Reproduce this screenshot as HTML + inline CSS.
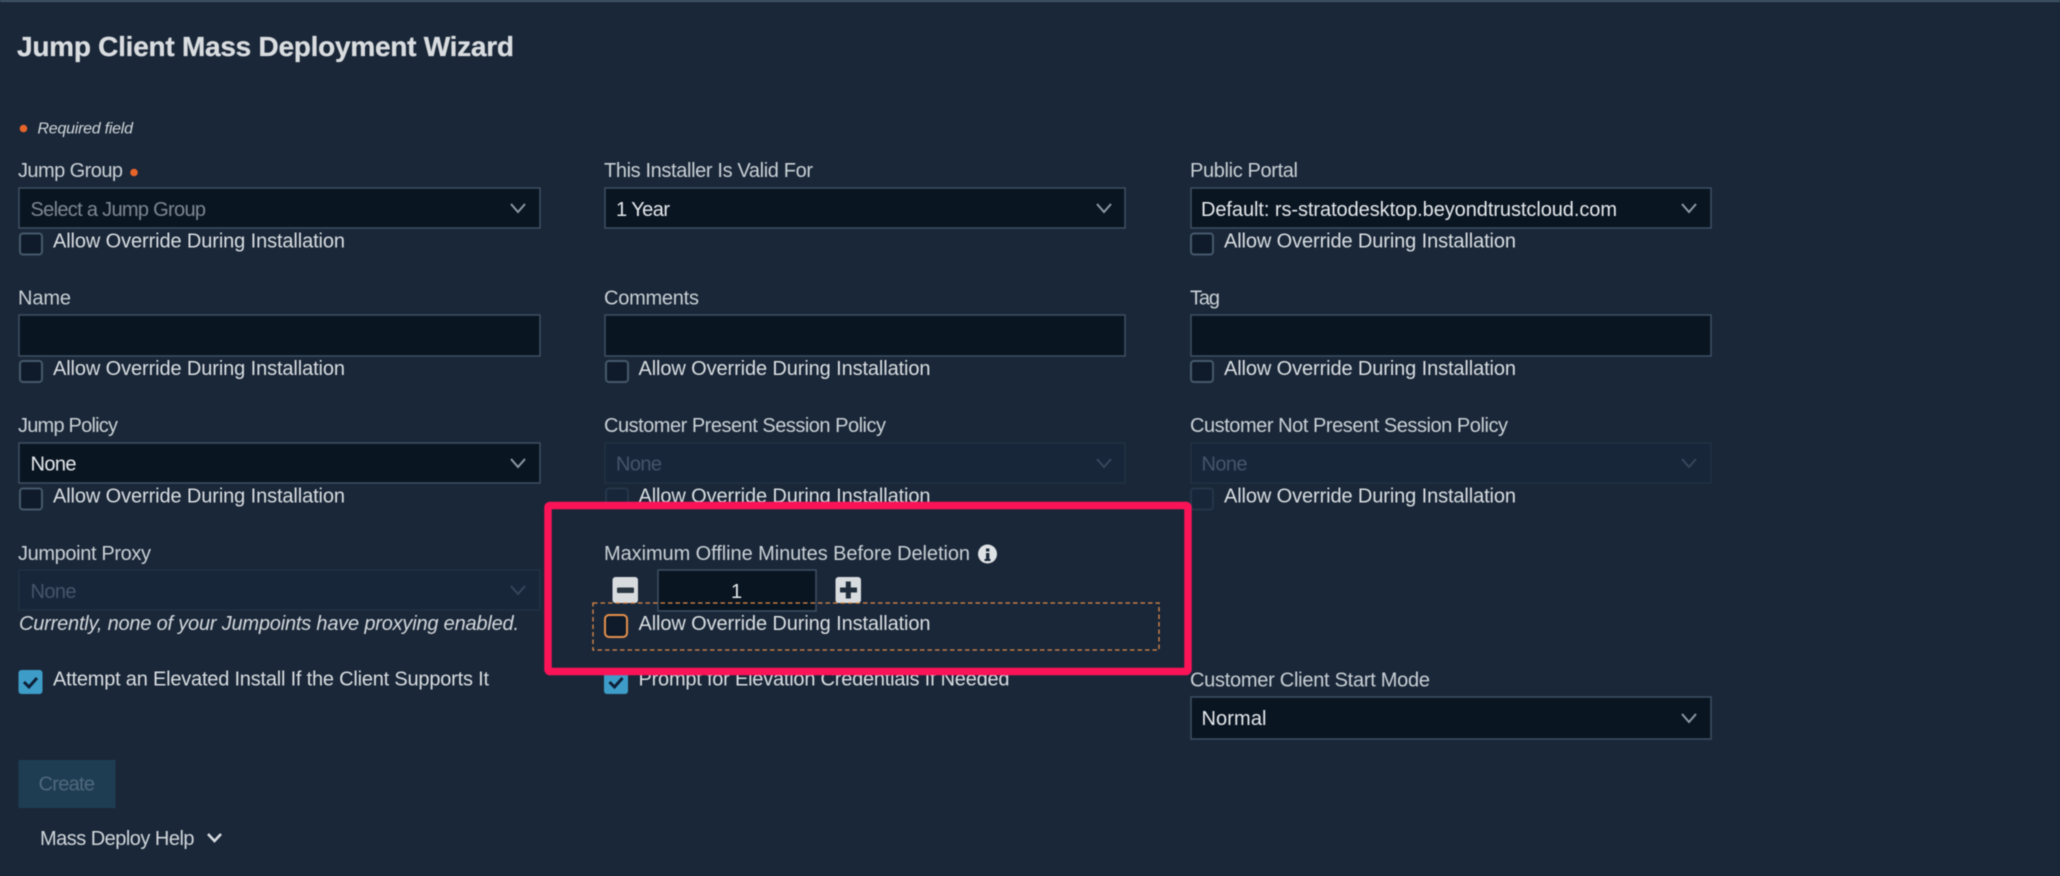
<!DOCTYPE html>
<html><head><meta charset="utf-8"><style>
html,body{margin:0;padding:0;background:#1a2738;width:2060px;height:876px;overflow:hidden}
svg{display:block;filter:blur(.4px)}
text{font-family:"Liberation Sans",sans-serif;font-size:20px;fill:#c9d0d6}
.o{fill:#d9dee2}
.s{fill:#e4e8eb}
.p{fill:#7d8792}
.d{fill:#45566a}
.i{font-style:italic}
.b{fill:#0a1522;stroke:#3d4f62;stroke-width:1.5}
.x{fill:#18263a;stroke:#223346;stroke-width:1.2}
.c{fill:none;stroke:#8f99a3;stroke-width:2}
.cd{fill:none;stroke:#36475a;stroke-width:2}
.k{fill:#0f1b2a;stroke:#46596c;stroke-width:2}
.kd{fill:#18263a;stroke:#25364a;stroke-width:2}
</style></head><body>
<svg width="2060" height="876" viewBox="0 0 2060 876" xmlns="http://www.w3.org/2000/svg">
<rect width="2060" height="876" fill="#1a2738"/>
<rect width="2060" height="2" fill="#43566b"/>
<text x="17" y="56" textLength="497" lengthAdjust="spacing" style="font-size:28px;font-weight:bold;fill:#d9dde0;stroke:#d9dde0;stroke-width:.3">Jump Client Mass Deployment Wizard</text>
<circle cx="23.5" cy="128.5" r="3.8" fill="#e8652a"/>
<text x="37.5" y="133.5" textLength="95.5" class="i" style="font-size:16px;fill:#d0d6db">Required field</text>

<!-- Row 1 -->
<text x="18" y="177" textLength="105">Jump Group</text><circle cx="134" cy="172.5" r="3.8" fill="#e8652a"/>
<rect class="b" x="19" y="188" width="521" height="40"/><text class="p" x="30.5" y="216" textLength="175.5">Select a Jump Group</text>
<path class="c" d="M511 204l7 8 7-8"/>
<rect class="k" x="20" y="233.5" width="22" height="21" rx="3"/><text class="o" x="53" y="247.5" textLength="292">Allow Override During Installation</text>

<text x="604" y="177" textLength="209">This Installer Is Valid For</text>
<rect class="b" x="605" y="188" width="520" height="40"/><text class="s" x="616" y="216" textLength="54">1 Year</text>
<path class="c" d="M1097 204l7 8 7-8"/>

<text x="1190" y="177" textLength="108">Public Portal</text>
<rect class="b" x="1191" y="188" width="520" height="40"/><text class="s" x="1201" y="216" textLength="416">Default: rs-stratodesktop.beyondtrustcloud.com</text>
<path class="c" d="M1682 204l7 8 7-8"/>
<rect class="k" x="1191" y="233.5" width="22" height="21" rx="3"/><text class="o" x="1224" y="247.5" textLength="292">Allow Override During Installation</text>

<!-- Row 2 -->
<text x="18" y="304.5" textLength="53">Name</text>
<rect class="b" x="19" y="315" width="521" height="41"/>
<rect class="k" x="20" y="361" width="22" height="21" rx="3"/><text class="o" x="53" y="375" textLength="292">Allow Override During Installation</text>

<text x="604" y="304.5" textLength="95">Comments</text>
<rect class="b" x="605" y="315" width="520" height="41"/>
<rect class="k" x="606" y="361" width="22" height="21" rx="3"/><text class="o" x="638.5" y="375" textLength="292">Allow Override During Installation</text>

<text x="1190" y="304.5" textLength="30">Tag</text>
<rect class="b" x="1191" y="315" width="520" height="41"/>
<rect class="k" x="1191" y="361" width="22" height="21" rx="3"/><text class="o" x="1224" y="375" textLength="292">Allow Override During Installation</text>

<!-- Row 3 -->
<text x="18" y="432" textLength="100">Jump Policy</text>
<rect class="b" x="19" y="443" width="521" height="40"/><text class="s" x="30.5" y="470.5" textLength="46">None</text>
<path class="c" d="M511 459l7 8 7-8"/>
<rect class="k" x="20" y="488.5" width="22" height="21" rx="3"/><text class="o" x="53" y="502.5" textLength="292">Allow Override During Installation</text>

<text x="604" y="432" textLength="282">Customer Present Session Policy</text>
<rect class="x" x="605" y="443" width="520" height="40"/><text class="d" x="616" y="470.5" textLength="46">None</text>
<path class="cd" d="M1097 459l7 8 7-8"/>
<rect class="kd" x="606" y="488.5" width="22" height="21" rx="3"/><text class="o" x="638.5" y="502.5" textLength="292">Allow Override During Installation</text>

<text x="1190" y="432" textLength="318">Customer Not Present Session Policy</text>
<rect class="x" x="1191" y="443" width="520" height="40"/><text class="d" x="1201.5" y="470.5" textLength="46">None</text>
<path class="cd" d="M1682 459l7 8 7-8"/>
<rect class="kd" x="1191" y="488.5" width="22" height="21" rx="3"/><text class="o" x="1224" y="502.5" textLength="292">Allow Override During Installation</text>

<!-- Row 4 col 1 -->
<text x="18" y="560" textLength="133">Jumpoint Proxy</text>
<rect class="x" x="19" y="570" width="521" height="40"/><text class="d" x="30.5" y="598" textLength="46">None</text>
<path class="cd" d="M511 586l7 8 7-8"/>
<text class="i" x="19" y="630" textLength="500" style="fill:#d3d8dd">Currently, none of your Jumpoints have proxying enabled.</text>

<!-- Row 5 -->
<rect x="18.5" y="670" width="24" height="24" rx="3" fill="#3e9cc9"/>
<path d="M24 682l5 5 8-9" fill="none" stroke="#0e1f36" stroke-width="3"/>
<text class="o" x="53" y="685.5" textLength="436">Attempt an Elevated Install If the Client Supports It</text>

<rect x="604" y="670" width="24" height="24" rx="3" fill="#3e9cc9"/>
<path d="M609.5 682l5 5 8-9" fill="none" stroke="#0e1f36" stroke-width="3"/>
<text class="o" x="638.5" y="685.5" textLength="371">Prompt for Elevation Credentials If Needed</text>

<text x="1190" y="686.5" textLength="240">Customer Client Start Mode</text>
<rect class="b" x="1191" y="697" width="520" height="42"/><text class="s" x="1201.5" y="725" textLength="65">Normal</text>
<path class="c" d="M1682 714l7 8 7-8"/>

<!-- Highlight box -->
<rect x="548" y="505.5" width="640" height="166" rx="2" fill="#1a2738" stroke="#fb1358" stroke-width="7.5"/>
<text x="604" y="560" textLength="366">Maximum Offline Minutes Before Deletion</text>
<circle cx="987.5" cy="554" r="9.5" fill="#dfe2e5"/>
<rect x="986" y="553" width="3.4" height="7" fill="#1a2738"/><rect x="986" y="548.5" width="3.4" height="3" fill="#1a2738"/>
<rect x="984.5" y="559" width="6" height="2" fill="#1a2738"/>
<rect x="612.5" y="577" width="25.5" height="26" rx="3" fill="#d8dcdf"/>
<rect x="617" y="587.5" width="17" height="5.5" rx="1" fill="#2a3542"/>
<rect x="658" y="570" width="158" height="41" fill="#0a1522" stroke="#3d4f62" stroke-width="1.5"/>
<text class="s" x="731" y="598" textLength="10">1</text>
<rect x="835.5" y="577" width="25.5" height="26" rx="3" fill="#d8dcdf"/>
<rect x="840" y="587.5" width="17" height="5" fill="#1f2c3a"/><rect x="845.8" y="581.5" width="5" height="17" fill="#1f2c3a"/>
<rect x="593" y="603" width="566" height="47" fill="none" stroke="#dd8a48" stroke-width="1.3" stroke-dasharray="4.5 3"/>
<rect x="605" y="615" width="22" height="22" rx="4" fill="#0f1b2a" stroke="#e58f4c" stroke-width="2"/>
<text class="o" x="638.5" y="630" textLength="292">Allow Override During Installation</text>

<!-- Footer -->
<rect x="18.5" y="760" width="97" height="48" fill="#1e3d52"/>
<text x="38.5" y="790.5" textLength="56.5" style="fill:#4f687c">Create</text>
<text x="40" y="845" textLength="154.5" style="fill:#d0d6db">Mass Deploy Help</text>
<path d="M208 834l6.5 7 6.5-7" fill="none" stroke="#d8dde1" stroke-width="2.6"/>
</svg>
</body></html>
